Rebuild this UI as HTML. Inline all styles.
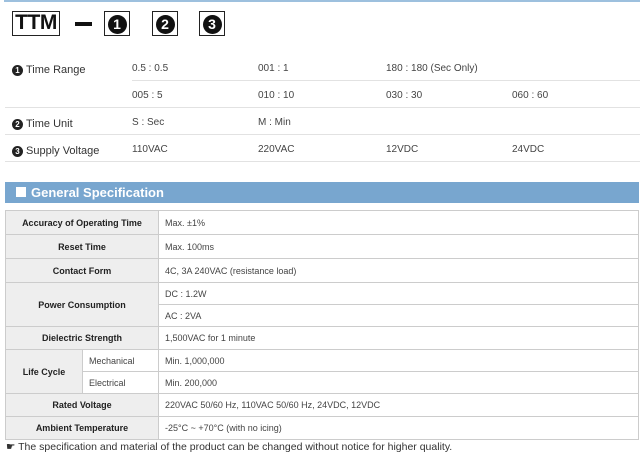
<!DOCTYPE html><html><head><meta charset="utf-8"><style>
*{margin:0;padding:0;box-sizing:border-box}
body{width:640px;height:458px;background:#fff;position:relative;font-family:"Liberation Sans",sans-serif;color:#333;overflow:hidden}
.a{position:absolute;white-space:nowrap}
.box{position:absolute;border:1.5px solid #222;height:25px;top:11px;font-weight:bold;font-size:21px;text-align:center;line-height:22px;color:#111;background:#fff;letter-spacing:-0.5px}
.c{display:inline-block;width:19px;height:19px;border-radius:50%;background:#111;color:#fff;font-size:14px;line-height:19px;margin-top:2px;letter-spacing:0}
.s{display:inline-block;width:11px;height:11px;border-radius:50%;background:#222;color:#fff;font-size:8px;line-height:11px;text-align:center;font-weight:bold;vertical-align:0px;margin-right:3px}
.t{font-size:10px;color:#444}
.l{font-size:11px;color:#333}
.hl{position:absolute;height:1px;background:#e2e2e2}
table{position:absolute;left:5px;top:210px;width:634px;border-collapse:collapse;font-size:9px}
td{border:1px solid #ccc;padding:0 6px;color:#444}
td.h{background:#eee;text-align:center;font-weight:bold;color:#222;width:153px}
td.m{background:#fff}
tr.r24{height:24px}tr.r23{height:23px}tr.r22{height:22px}
</style></head><body>
<div class="a" style="left:4px;top:0;width:636px;height:2px;background:#9dc0de"></div>
<div class="box" style="left:12px;width:48px">TTM</div>
<div class="a" style="left:75px;top:22px;width:17px;height:4px;background:#111"></div>
<div class="box" style="left:104px;width:26px"><span class="c">1</span></div>
<div class="box" style="left:152px;width:26px"><span class="c">2</span></div>
<div class="box" style="left:199px;width:26px"><span class="c">3</span></div>

<div class="a l" style="left:12px;top:64px"><span class="s">1</span>Time Range</div>
<div class="a t" style="left:132px;top:63px">0.5 : 0.5</div>
<div class="a t" style="left:258px;top:63px">001 : 1</div>
<div class="a t" style="left:386px;top:63px">180 : 180 (Sec Only)</div>
<div class="hl" style="left:132px;top:80px;width:508px"></div>
<div class="a t" style="left:132px;top:90px">005 : 5</div>
<div class="a t" style="left:258px;top:90px">010 : 10</div>
<div class="a t" style="left:386px;top:90px">030 : 30</div>
<div class="a t" style="left:512px;top:90px">060 : 60</div>
<div class="hl" style="left:5px;top:107px;width:635px"></div>
<div class="a l" style="left:12px;top:118px"><span class="s">2</span>Time Unit</div>
<div class="a t" style="left:132px;top:117px">S : Sec</div>
<div class="a t" style="left:258px;top:117px">M : Min</div>
<div class="hl" style="left:5px;top:134px;width:635px"></div>
<div class="a l" style="left:12px;top:145px"><span class="s">3</span>Supply Voltage</div>
<div class="a t" style="left:132px;top:144px">110VAC</div>
<div class="a t" style="left:258px;top:144px">220VAC</div>
<div class="a t" style="left:386px;top:144px">12VDC</div>
<div class="a t" style="left:512px;top:144px">24VDC</div>
<div class="hl" style="left:5px;top:161px;width:635px"></div>

<div class="a" style="left:5px;top:182px;width:634px;height:21px;background:#78a6cf;color:#fff;font-weight:bold;font-size:13px;line-height:21px;padding-left:11px"><span style="display:inline-block;width:10px;height:10px;background:#fff;margin-right:5px"></span>General Specification</div>

<table>
<tr class="r24"><td class="h" colspan="2">Accuracy of Operating Time</td><td>Max. ±1%</td></tr>
<tr class="r24"><td class="h" colspan="2">Reset Time</td><td>Max. 100ms</td></tr>
<tr class="r24"><td class="h" colspan="2">Contact Form</td><td>4C, 3A 240VAC (resistance load)</td></tr>
<tr class="r22"><td class="h" colspan="2" rowspan="2">Power Consumption</td><td>DC : 1.2W</td></tr>
<tr class="r22"><td>AC : 2VA</td></tr>
<tr class="r23"><td class="h" colspan="2">Dielectric Strength</td><td>1,500VAC for 1 minute</td></tr>
<tr class="r22"><td class="h" rowspan="2" style="width:77px">Life Cycle</td><td class="m" style="width:76px">Mechanical</td><td>Min. 1,000,000</td></tr>
<tr class="r22"><td class="m">Electrical</td><td>Min. 200,000</td></tr>
<tr class="r23"><td class="h" colspan="2">Rated Voltage</td><td>220VAC 50/60 Hz, 110VAC 50/60 Hz, 24VDC, 12VDC</td></tr>
<tr class="r23"><td class="h" colspan="2">Ambient Temperature</td><td>-25°C ~ +70°C (with no icing)</td></tr>
</table>
<div class="a" style="left:6px;top:441px;font-size:10.5px;color:#333">☛ The specification and material of the product can be changed without notice for higher quality.</div>
</body></html>
